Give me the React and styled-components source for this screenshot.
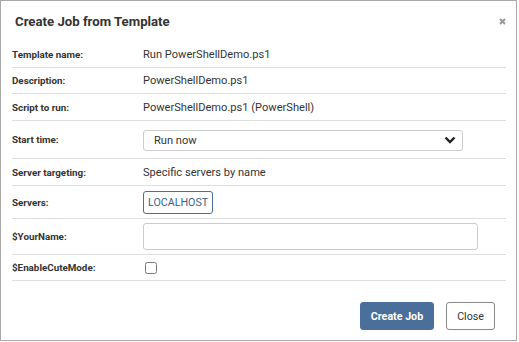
import React from 'react';
import styled, { createGlobalStyle } from 'styled-components';

const GlobalStyle = createGlobalStyle`
  body {
    margin: 0;
    background: #fff;
    font-family: Roboto, "Liberation Sans", sans-serif;
    color: #333;
  }
`;

const rows = [
  { label: 'Template name:', h: 27, value: 'Run PowerShellDemo.ps1' },
  { label: 'Description:', h: 26, value: 'PowerShellDemo.ps1' },
  { label: 'Script to run:', h: 27, value: 'PowerShellDemo.ps1 (PowerShell)' },
  { label: 'Start time:', h: 38, kind: 'select' },
  { label: 'Server targeting:', h: 27, value: 'Specific servers by name' },
  { label: 'Servers:', h: 33, kind: 'server' },
  { label: '$YourName:', h: 36, kind: 'input' },
  { label: '$EnableCuteMode:', h: 26, kind: 'check' },
];

const App = () => {
  const renderValue = (row) => {
    if (row.kind === 'select') {
      return (
        <SelectWrap>
          <Select defaultValue="now">
            <option value="now">Run now</option>
          </Select>
          <Chevron width="12" height="8" viewBox="0 0 12 8">
            <polyline points="1.5,1.5 6,6 10.5,1.5" fill="none" stroke="#222" strokeWidth="2.4" />
          </Chevron>
        </SelectWrap>
      );
    }
    if (row.kind === 'server') return <ServerTag>LOCALHOST</ServerTag>;
    if (row.kind === 'input') return <TextInput type="text" />;
    if (row.kind === 'check') return <Check type="checkbox" />;
    return <Value>{row.value}</Value>;
  };

  return (
    <>
      <GlobalStyle />
      <Dialog>
        <Header>
          <Title>Create Job from Template</Title>
          <CloseX width="7" height="7" viewBox="0 0 7 7">
            <path d="M1 1 L6 6 M6 1 L1 6" stroke="#999" strokeWidth="2" />
          </CloseX>
        </Header>
        <Body>
          {rows.map((row) => (
            <Row key={row.label} $h={row.h}>
              <Label>{row.label}</Label>
              {renderValue(row)}
            </Row>
          ))}
        </Body>
        <Footer>
          <PrimaryButton>Create Job</PrimaryButton>
          <Button>Close</Button>
        </Footer>
      </Dialog>
    </>
  );
};

const Dialog = styled.div`
  width: 517px;
  height: 341px;
  box-sizing: border-box;
  border: 1px solid #a8a8a8;
  display: flex;
  flex-direction: column;
  background: #fff;
`;

const Header = styled.div`
  height: 40px;
  display: flex;
  align-items: center;
  justify-content: space-between;
  padding: 0 10px 0 14px;
`;

const Title = styled.h2`
  margin: 0;
  font-size: 13.2px;
  font-weight: 700;
  color: #333;
`;

const CloseX = styled.svg`
  display: block;
`;

const Body = styled.div`
  display: flex;
  flex-direction: column;
  padding: 0 10px 0 11px;
`;

const Row = styled.div`
  display: grid;
  grid-template-columns: 131px 1fr;
  align-items: center;
  height: ${(p) => p.$h}px;
  box-sizing: border-box;
  border-bottom: 1px solid #dedede;
`;

const Label = styled.div`
  font-size: 9.8px;
  font-weight: 700;
  color: #333;
`;

const Value = styled.div`
  font-size: 11.1px;
  color: #333;
`;

const SelectWrap = styled.div`
  position: relative;
  width: 320px;
`;

const Select = styled.select`
  appearance: none;
  width: 100%;
  height: 21px;
  box-sizing: border-box;
  border: 1px solid #ccc;
  border-radius: 3px;
  background: #fff;
  padding: 0 10px;
  font-family: inherit;
  font-size: 11.1px;
  color: #333;
`;

const Chevron = styled.svg`
  position: absolute;
  right: 7px;
  top: 7px;
  pointer-events: none;
`;

const ServerTag = styled.div`
  justify-self: start;
  box-sizing: border-box;
  height: 23px;
  padding: 0 4px;
  display: flex;
  align-items: center;
  border: 1px solid #4a6e98;
  border-radius: 3px;
  font-size: 10.7px;
  color: #3d5f88;
`;

const TextInput = styled.input`
  width: 335px;
  height: 27px;
  box-sizing: border-box;
  border: 1px solid #ccc;
  border-radius: 3px;
  padding: 0 8px;
  font-family: inherit;
  font-size: 11.1px;
`;

const Check = styled.input`
  margin: 0 0 0 2px;
  width: 12px;
  height: 12px;
  justify-self: start;
`;

const Footer = styled.div`
  display: flex;
  justify-content: flex-end;
  gap: 12px;
  padding: 21px 21px 0 0;
`;

const Button = styled.button`
  height: 28px;
  box-sizing: border-box;
  padding: 0 10px;
  border: 1px solid #8a8a8a;
  border-radius: 3px;
  background: #fff;
  font-family: inherit;
  font-size: 10.7px;
  color: #333;
`;

const PrimaryButton = styled(Button)`
  border-color: #4a6f9b;
  background: #4a6f9b;
  color: #fff;
  font-weight: 700;
`;

export default App;
